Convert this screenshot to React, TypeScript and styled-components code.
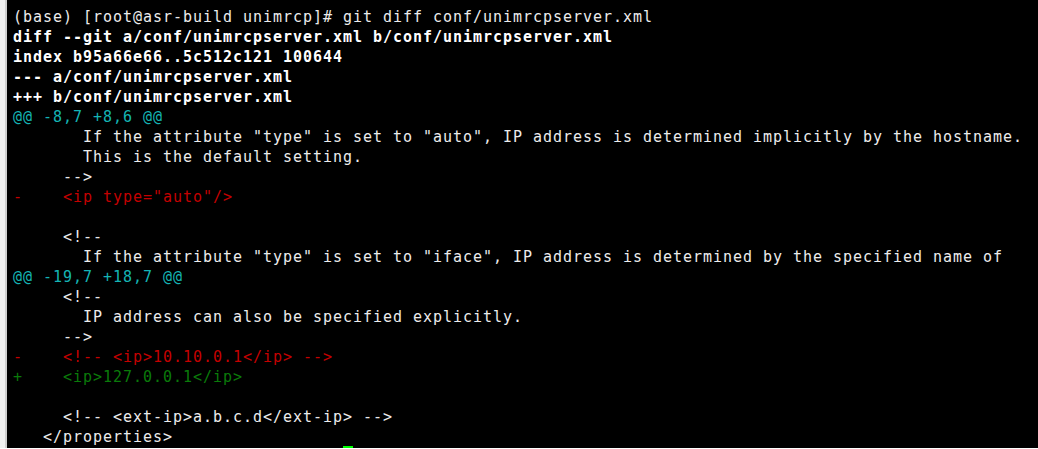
import React from "react";
import styled, { createGlobalStyle } from "styled-components";

const Global = createGlobalStyle`
  html, body { margin: 0; padding: 0; background: #000; }
  body { width: 1038px; height: 449px; overflow: hidden; }
`;

type Tone = "plain" | "bold" | "hunk" | "del" | "add";

const Window = styled.div`
  display: flex;
  width: 1038px;
  height: 449px;
  box-sizing: border-box;
  border-bottom: 1px solid #ffffff;
  overflow: hidden;
`;

const Gutter = styled.div`
  width: 5px;
  flex: none;
  background: #f0f0f0;
  border-right: 2px solid #cfcfcf;
`;

const Screen = styled.div`
  flex: 1;
  background: #000;
  padding: 7px 0 0 6px;
  display: flex;
  flex-direction: column;
  overflow: hidden;
  font-family: "DejaVu Sans Mono", "Liberation Mono", monospace;
  font-size: 15px;
  letter-spacing: 0.97px;
  line-height: 20px;
`;

const toneColor: Record<Tone, string> = {
  plain: "#ececec",
  bold: "#ffffff",
  hunk: "#14b4b4",
  del: "#c40000",
  add: "#0a7a0a",
};

const Line = styled.div<{ $tone?: Tone }>`
  height: 20px;
  flex: none;
  white-space: pre;
  color: ${(p) => toneColor[p.$tone || "plain"]};
  font-weight: ${(p) => (p.$tone === "bold" ? 700 : 400)};
`;

const Cursor = styled.span`
  display: inline-block;
  width: 10px;
  height: 20px;
  margin-top: -1px;
  background: #00ff00;
  vertical-align: top;
`;

const lines: { t: string; tone?: Tone }[] = [
  { t: "(base) [root@asr-build unimrcp]# git diff conf/unimrcpserver.xml" },
  { t: "diff --git a/conf/unimrcpserver.xml b/conf/unimrcpserver.xml", tone: "bold" },
  { t: "index b95a66e66..5c512c121 100644", tone: "bold" },
  { t: "--- a/conf/unimrcpserver.xml", tone: "bold" },
  { t: "+++ b/conf/unimrcpserver.xml", tone: "bold" },
  { t: "@@ -8,7 +8,6 @@", tone: "hunk" },
  { t: '       If the attribute "type" is set to "auto", IP address is determined implicitly by the hostname.' },
  { t: "       This is the default setting." },
  { t: "     -->" },
  { t: '-    <ip type="auto"/>', tone: "del" },
  { t: "" },
  { t: "     <!--" },
  { t: '       If the attribute "type" is set to "iface", IP address is determined by the specified name of' },
  { t: "@@ -19,7 +18,7 @@", tone: "hunk" },
  { t: "     <!--" },
  { t: "       IP address can also be specified explicitly." },
  { t: "     -->" },
  { t: "-    <!-- <ip>10.10.0.1</ip> -->", tone: "del" },
  { t: "+    <ip>127.0.0.1</ip>", tone: "add" },
  { t: "" },
  { t: "     <!-- <ext-ip>a.b.c.d</ext-ip> -->" },
  { t: "   </properties>" },
];

export default function App() {
  return (
    <>
      <Global />
      <Window>
        <Gutter />
        <Screen>
          {lines.map((l, i) => (
            <Line key={i} $tone={l.tone}>
              {l.t}
            </Line>
          ))}
          <Line>
            {" ".repeat(33)}
            <Cursor />
          </Line>
        </Screen>
      </Window>
    </>
  );
}
